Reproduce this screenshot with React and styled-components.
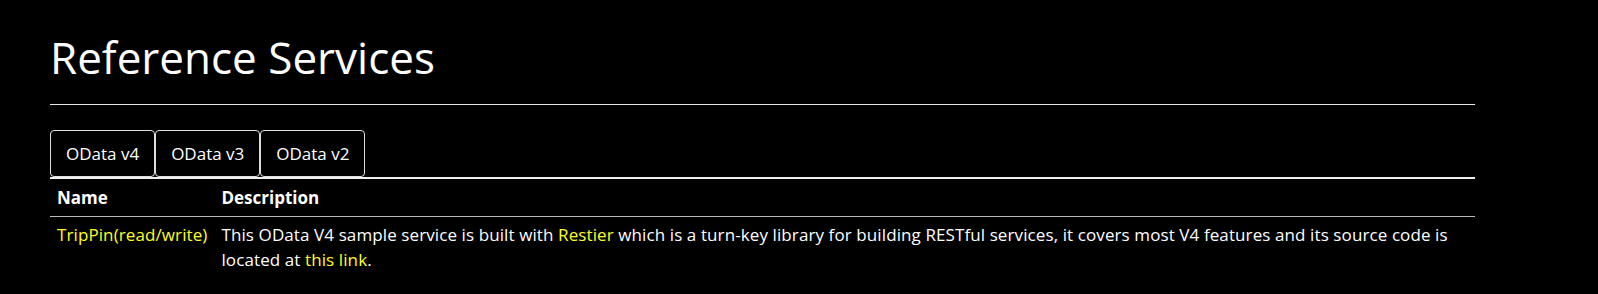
import React, {useState} from 'react';
import styled, {createGlobalStyle} from "styled-components";

const GlobalStyle = createGlobalStyle`
  body {
    margin: 0;
    background: #000;
    color: #fff;
    font-family: "Open Sans", "Liberation Sans", sans-serif;
  }
`

const Page = styled.div`
  padding: 0 123px 0 50px;
  height: 294px;
  box-sizing: border-box;
`

const Title = styled.h1`
  margin: 0;
  padding-top: 31px;
  font-size: 44px;
  font-weight: 400;
  line-height: 52px;
  padding-bottom: 21px;
  border-bottom: 1px solid #e6e6e6;
`

const Tabs = styled.div`
  display: flex;
  margin-top: 25px;
  border-bottom: 2px solid #f0f0f0;
`

const Tab = styled.button`
  background: #000;
  color: #fff;
  border: 1px solid #ddd;
  border-radius: 4px;
  font-family: inherit;
  font-size: 17px;
  height: 47px;
  padding: 0 15px;
  margin: 0;
  cursor: pointer;
`

const Table = styled.table`
  width: 100%;
  border-collapse: collapse;
  font-size: 17px;

  th {
    text-align: left;
    font-weight: 700;
    padding: 7px 7px 6px;
    border-bottom: 1px solid #bbb;
    line-height: 24px;
  }
  td {
    vertical-align: top;
    padding: 5px 7px;
    line-height: 25px;
    letter-spacing: 0.1px;
  }
`

const Link = styled.a`
  color: #ffff1a;
  text-decoration: none;
`

const tabs = ["OData v4", "OData v3", "OData v2"]

const App = () => {
    const [active, setActive] = useState(0)

    return (
        <Page>
            <GlobalStyle/>
            <Title>Reference Services</Title>
            <Tabs>
                {tabs.map((t, i) =>
                    <Tab key={t} onClick={() => setActive(i)} aria-selected={active === i}>{t}</Tab>
                )}
            </Tabs>
            <Table>
                <thead>
                <tr>
                    <th style={{width: 148}}>Name</th>
                    <th>Description</th>
                </tr>
                </thead>
                <tbody>
                <tr>
                    <td><Link href="#">TripPin(read/write)</Link></td>
                    <td>
                        This OData V4 sample service is built with <Link href="#">Restier</Link> which is a turn-key
                        library for building RESTful services, it covers most V4 features and its source code is
                        located at <Link href="#">this link</Link>.
                    </td>
                </tr>
                </tbody>
            </Table>
        </Page>
    );
};

export default App;
